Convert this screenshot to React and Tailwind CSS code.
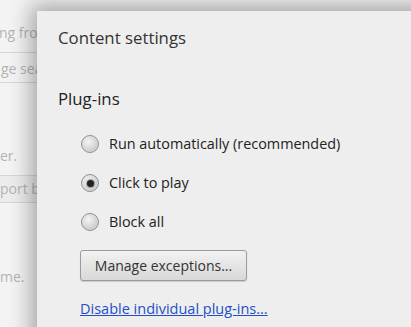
export default function App() {
  const font = { fontFamily: '"Open Sans", "Noto Sans", sans-serif' };
  const Radio = ({ checked }) => (
    <span className="relative flex h-[18px] w-[18px] items-center justify-center rounded-full border border-[#8f8f8f] bg-[radial-gradient(circle_at_40%_35%,#f4f4f4,#d2d2d2_60%,#bdbdbd)] shadow-[inset_0_0_1px_rgba(255,255,255,0.9)]">
      {checked && <span className="h-[7px] w-[7px] rounded-full bg-[#222] shadow-[0_0_1px_1px_rgba(0,0,0,0.3)]" />}
    </span>
  );
  return (
    <div className="relative h-[327px] w-[411px] overflow-hidden bg-[#f3f3f3] text-[#b4b4b4]" style={font}>
      <div className="flex flex-col pt-[23px] text-[14px] leading-[20px] whitespace-nowrap">
        <div className="-ml-[1px]">ng from</div>
        <div className="mt-[9px] h-[31px] w-[60px] border-y border-[#d6d6d6] pl-[1px] pt-[3px] leading-[26px]">ge search</div>
        <div className="mt-[63px]">er.</div>
        <div className="mt-[9px] h-[28px] w-[60px] border-y border-[#d6d6d6] bg-[#ececec] leading-[26px]">port bo</div>
        <div className="mt-[64px]">me.</div>
      </div>
      <div className="absolute left-[37px] top-[11px] h-[340px] w-[400px] bg-[#eeeeee] pl-[21px] pt-[15px] text-[#2f2f2f] shadow-[0_0_20px_6px_rgba(0,0,0,0.32)]">
        <div className="text-[16.8px] leading-[24px] text-[#333]">Content settings</div>
        <div className="mt-[37px] text-[16.8px] leading-[24px] text-[#222]">Plug-ins</div>
        <div className="ml-[23px] mt-[23px] flex flex-col gap-[19px] text-[14.4px] leading-[20px] text-[#222]">
          <label className="flex items-center gap-[10px]"><Radio />Run automatically (recommended)</label>
          <label className="flex items-center gap-[10px]"><Radio checked />Click to play</label>
          <label className="flex items-center gap-[10px]"><Radio />Block all</label>
        </div>
        <div className="ml-[22px] mt-[18px] flex h-[31px] w-[167px] items-center justify-center rounded-[3px] border border-[#9a9a9a] bg-[linear-gradient(#f2f2f2,#d8d8d8)] text-[14px] text-[#333] shadow-[0_1px_1px_rgba(0,0,0,0.15)]">Manage exceptions...</div>
        <div className="ml-[22px] mt-[18px] text-[14.5px] leading-[20px] text-[#1f4fc8] underline">Disable individual plug-ins...</div>
      </div>
    </div>
  );
}
